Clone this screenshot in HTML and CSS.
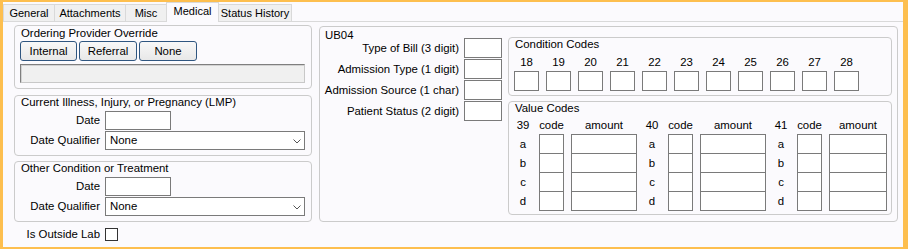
FILE: index.html
```html
<!DOCTYPE html>
<html>
<head>
<meta charset="utf-8">
<link rel="stylesheet" href="styles.css">
</head>
<body>
<div class="frame">
  <div class="tabs">
    <div class="tab t-general">General</div>
    <div class="tab t-attach">Attachments</div>
    <div class="tab t-misc">Misc</div>
    <div class="tab tab-active t-medical">Medical</div>
    <div class="tab t-status">Status History</div>
  </div>
  <div class="page">
    <div class="left">
      <div class="group g-provider">
        <div class="title">Ordering Provider Override</div>
        <div class="buttons">
          <div class="btn b-internal">Internal</div>
          <div class="btn b-referral">Referral</div>
          <div class="btn b-none">None</div>
        </div>
        <div class="disabled-field"></div>
      </div>
      <div class="group g-date g-illness">
        <div class="title">Current Illness, Injury, or Pregnancy (LMP)</div>
        <div class="form">
          <div class="lbl">Date</div>
          <div class="input date-input"></div>
          <div class="lbl">Date Qualifier</div>
          <div class="select"><span>None</span><svg width="8" height="5" viewBox="0 0 8 5"><polyline points="0.5,0.5 4,4 7.5,0.5" fill="none" stroke="#555" stroke-width="1"/></svg></div>
        </div>
      </div>
      <div class="group g-date g-other">
        <div class="title">Other Condition or Treatment</div>
        <div class="form">
          <div class="lbl">Date</div>
          <div class="input date-input"></div>
          <div class="lbl">Date Qualifier</div>
          <div class="select"><span>None</span><svg width="8" height="5" viewBox="0 0 8 5"><polyline points="0.5,0.5 4,4 7.5,0.5" fill="none" stroke="#555" stroke-width="1"/></svg></div>
        </div>
      </div>
      <div class="outside">
        <div class="lbl">Is Outside Lab</div>
        <div class="checkbox"></div>
      </div>
    </div>
    <div class="group ub04">
      <div class="ub-left">
        <div class="title ub-title">UB04</div>
        <div class="ub-fields">
          <div class="lbl">Type of Bill (3 digit)</div><div class="input ub-input"></div>
          <div class="lbl">Admission Type (1 digit)</div><div class="input ub-input"></div>
          <div class="lbl">Admission Source (1 char)</div><div class="input ub-input"></div>
          <div class="lbl">Patient Status (2 digit)</div><div class="input ub-input"></div>
        </div>
      </div>
      <div class="ub-right">
        <div class="group cond">
          <div class="title">Condition Codes</div>
          <div class="cond-grid">
            <div class="num">18</div><div class="num">19</div><div class="num">20</div><div class="num">21</div><div class="num">22</div><div class="num">23</div><div class="num">24</div><div class="num">25</div><div class="num">26</div><div class="num">27</div><div class="num">28</div>
            <div class="input cc"></div><div class="input cc"></div><div class="input cc"></div><div class="input cc"></div><div class="input cc"></div><div class="input cc"></div><div class="input cc"></div><div class="input cc"></div><div class="input cc"></div><div class="input cc"></div><div class="input cc"></div>
          </div>
        </div>
        <div class="group value">
          <div class="title">Value Codes</div>
          <div class="vc-groups">
            <div class="vc">
              <div class="vh">39</div><div class="vh">code</div><div class="vh">amount</div>
              <div class="lt">a</div><div class="input vi"></div><div class="input vi"></div>
              <div class="lt">b</div><div class="input vi"></div><div class="input vi"></div>
              <div class="lt">c</div><div class="input vi"></div><div class="input vi"></div>
              <div class="lt">d</div><div class="input vi"></div><div class="input vi"></div>
            </div>
            <div class="vc">
              <div class="vh">40</div><div class="vh">code</div><div class="vh">amount</div>
              <div class="lt">a</div><div class="input vi"></div><div class="input vi"></div>
              <div class="lt">b</div><div class="input vi"></div><div class="input vi"></div>
              <div class="lt">c</div><div class="input vi"></div><div class="input vi"></div>
              <div class="lt">d</div><div class="input vi"></div><div class="input vi"></div>
            </div>
            <div class="vc vc-last">
              <div class="vh">41</div><div class="vh">code</div><div class="vh">amount</div>
              <div class="lt">a</div><div class="input vi"></div><div class="input vi"></div>
              <div class="lt">b</div><div class="input vi"></div><div class="input vi"></div>
              <div class="lt">c</div><div class="input vi"></div><div class="input vi"></div>
              <div class="lt">d</div><div class="input vi"></div><div class="input vi"></div>
            </div>
          </div>
        </div>
      </div>
    </div>
  </div>
</div>
</body>
</html>
```

FILE: styles.css
```css
* { box-sizing: border-box; }
html, body { margin: 0; padding: 0; background: #fbfafd; }
body {
  font-family: "Liberation Sans", Arial, sans-serif;
  font-size: 11.4px;
  color: #000;
}
.frame {
  width: 908px;
  height: 249px;
  border-style: solid;
  border-color: #fdbf4f;
  border-width: 2px 5px 2px 3px;
  background: #fbfafd;
  overflow: hidden;
}
.tabs {
  display: flex;
  align-items: flex-end;
  height: 19px;
  font-size: 11px;
}
.tab {
  height: 17px;
  line-height: 17px;
  text-align: center;
  background: #f0f0f0;
  border: 1px solid #d9d9d9;
  border-bottom: none;
  margin-left: -1px;
}
.t-general { width: 52px; margin-left: 0; }
.t-attach { width: 72px; }
.t-misc { width: 42px; }
.t-medical { width: 53px; }
.t-status { width: 74px; }
.tab-active {
  height: 20px;
  line-height: 16px;
  background: #fbfafd;
  margin-bottom: -1px;
  position: relative;
  z-index: 1;
}
.page {
  border-top: 1px solid #d9d9d9;
  display: flex;
  align-items: flex-start;
  padding: 3px 0 0 11px;
}
.left { width: 298px; }
.group {
  border: 1px solid #cbcbcb;
  border-radius: 4px;
}
.title {
  line-height: 13px;
  height: 13px;
  margin-left: 1px;
  white-space: nowrap;
}
.g-provider {
  height: 64px;
  padding: 0 6px 0 5px;
}
.g-provider .title { height: 14px; line-height: 14px; }
.buttons {
  display: flex;
  gap: 2px;
  margin-top: 1px;
}
.btn {
  height: 20px;
  line-height: 18px;
  text-align: center;
  border: 1px solid #2f5680;
  border-radius: 3px;
  background: linear-gradient(#f8f8f8, #e8e8e8);
}
.b-internal { width: 57px; }
.b-referral { width: 58px; }
.b-none { width: 58px; }
.disabled-field {
  margin-top: 3px;
  height: 19px;
  width: 285px;
  background: #f0f0f0;
  border: 1px solid #c8c8c8;
  border-top-color: #7f7f7f;
  border-left-color: #7f7f7f;
  box-shadow: inset 1px 1px 0 #d2d2d2;
}
.g-date {
  height: 61px;
  padding-right: 6px;
}
.g-illness { margin-top: 6px; }
.g-other { margin-top: 5px; }
.g-date .title { margin-left: 6px; }
.form {
  display: grid;
  grid-template-columns: 85px 200px;
  grid-auto-rows: 19px;
  column-gap: 5px;
  row-gap: 1px;
  margin-top: 2px;
}
.lbl {
  text-align: right;
  white-space: nowrap;
  line-height: 19px;
}
.input {
  background: #fff;
  border: 1px solid #7a7a7a;
}
.date-input { width: 66px; height: 19px; }
.select {
  height: 19px;
  background: #fff;
  border: 1px solid #7a7a7a;
  display: flex;
  align-items: center;
  justify-content: space-between;
  padding: 0 3px 0 4px;
  line-height: 17px;
}
.select svg { display: block; margin-top: 1px; }
.outside {
  display: grid;
  grid-template-columns: 85px 13px;
  column-gap: 5px;
  margin-top: 6px;
  padding-left: 1px;
  align-items: center;
}
.outside .lbl { line-height: 13px; }
.checkbox {
  width: 13px;
  height: 13px;
  background: #fff;
  border: 1px solid #333;
}
.ub04 {
  margin-left: 7px;
  margin-top: 1px;
  width: 579px;
  height: 196px;
  display: flex;
  align-items: flex-start;
  padding-right: 5px;
}
.ub-left { width: 182px; }
.ub-title {
  margin: 1px 0 0 5px;
  height: 10px;
  line-height: 14px;
}
.ub-fields {
  display: grid;
  grid-template-columns: 139px 38px;
  grid-auto-rows: 20px;
  column-gap: 5px;
  row-gap: 1px;
}
.ub-fields .lbl { line-height: 20px; }
.ub-input { height: 20px; }
.ub-right {
  width: 384px;
  margin-left: 6px;
  padding-top: 10px;
}
.cond {
  height: 59px;
  padding-left: 5px;
}
.cond-grid {
  display: grid;
  grid-template-columns: repeat(11, 25px);
  grid-template-rows: 14px 20px;
  column-gap: 7px;
  row-gap: 2px;
  margin-top: 4px;
}
.num {
  text-align: center;
  line-height: 14px;
}
.cc { height: 20px; }
.value {
  margin-top: 5px;
  height: 114px;
  padding-left: 5px;
}
.vc-groups {
  display: flex;
  gap: 6px;
  margin-top: 3px;
}
.vc {
  display: grid;
  grid-template-columns: 18px 25px 66px;
  grid-template-rows: 16px repeat(4, 19px);
  column-gap: 7px;
}
.vc-last { grid-template-columns: 18px 25px 58px; }
.vh {
  text-align: center;
  line-height: 14px;
}
.lt {
  text-align: center;
  line-height: 20px;
}
.vi { height: 20px; }
```
